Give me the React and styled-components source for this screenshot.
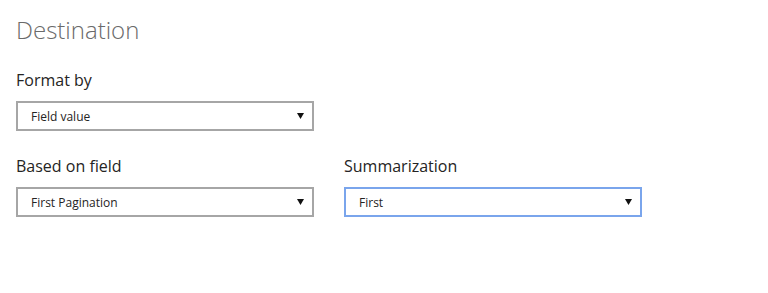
import React from "react";
import styled, { createGlobalStyle } from "styled-components";

const GlobalStyle = createGlobalStyle`
    html, body {
        margin: 0;
        padding: 0;
        background: #ffffff;
    }
    body {
        font-family: "Open Sans", "Noto Sans", sans-serif;
    }
`;

const Page = styled.div`
    width: 768px;
    height: 293px;
    box-sizing: border-box;
    padding: 14px 16px 0;
`;

const Title = styled.h1`
    margin: 0 0 24px;
    font-size: 24px;
    line-height: 32px;
    font-weight: 300;
    color: #6a6a6a;
`;

const Row = styled.div`
    display: flex;
    gap: 30px;
    margin-bottom: 25px;
`;

const Field = styled.div`
    width: 298px;
    display: flex;
    flex-direction: column;
`;

const Label = styled.label`
    font-size: 16px;
    line-height: 20px;
    color: #252423;
    margin-bottom: 11px;
`;

const Select = styled.div`
    height: 30px;
    box-sizing: border-box;
    border: 2px solid ${({ $focused }) => ($focused ? "#7aa5ec" : "#a6a6a6")};
    display: flex;
    align-items: center;
    justify-content: space-between;
    padding: 0 8px 0 13px;
    font-size: 12px;
    color: #252423;
`;

const Arrow = styled.svg`
    width: 7px;
    height: 6px;
`;

const Dropdown = ({ value, focused }) => (
    <Select $focused={focused}>
        <span>{value}</span>
        <Arrow viewBox="0 0 7 6">
            <path d="M0 0h7L3.5 6z" fill="#111" />
        </Arrow>
    </Select>
);

const App = () => (
    <>
        <GlobalStyle />
        <Page>
            <Title>Destination</Title>
            <Row>
                <Field>
                    <Label>Format by</Label>
                    <Dropdown value="Field value" />
                </Field>
            </Row>
            <Row>
                <Field>
                    <Label>Based on field</Label>
                    <Dropdown value="First Pagination" />
                </Field>
                <Field>
                    <Label>Summarization</Label>
                    <Dropdown value="First" focused />
                </Field>
            </Row>
        </Page>
    </>
);

export default App;
